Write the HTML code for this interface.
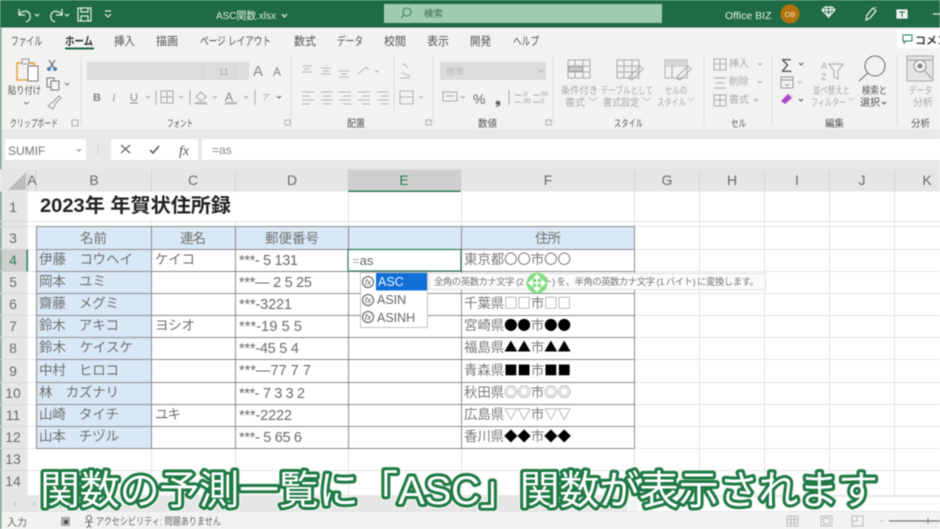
<!DOCTYPE html>
<html lang="ja"><head><meta charset="utf-8"><style>
html,body{margin:0;padding:0;background:#fff;width:940px;height:529px;overflow:hidden}
svg{display:block;filter:blur(.55px)}
text{font-family:"Liberation Sans","Noto Sans CJK JP",sans-serif}
.tab{font-size:11.5px;fill:#555}
.lb{font-size:10px;fill:#555}
.g{font-size:10px;fill:#aaa}
.rh{font-size:14px;fill:#6a6a6a;text-anchor:middle}
.ch{font-size:14px;fill:#6a6a6a;text-anchor:middle}
.c{font-size:13.5px;fill:#707070}
.d{font-size:14.5px;fill:#6a6a6a}
.f{font-size:13.5px;fill:#7a7a7a;font-family:"Noto Sans CJK JP",sans-serif}
.k{fill:#000}
.ic{fill:none;stroke:#aaa;stroke-width:1}
.ac{font-size:12.5px;fill:#666}
</style></head><body>
<svg width="940" height="529" viewBox="0 0 940 529" xmlns="http://www.w3.org/2000/svg">
<rect width="940" height="529" fill="#fff"/>
<!-- title bar -->
<rect width="940" height="27.5" fill="#1f6b45"/>
<g fill="none" stroke="#e4efe9" stroke-width="1.200">
<path d="M19 9v6h6M19 15c3-5 10-5 11 0c1 3-1 6-4 7"/>
<path d="M62 9v6h-6M62 15c-3-5-10-5-11 0c-1 3 1 6 4 7"/>
<rect x="78" y="8" width="13" height="13"/><path d="M81 8v4h7V8M81 21v-5h7v5"/>
<path d="M35 14l2 2 2-2M65 14l2 2 2-2"/>
<path d="M105 11h6M105 14l3 3 3-3"/>
</g>
<text x="216" y="19" font-size="10.500" fill="#dfece5" textLength="60" lengthAdjust="spacingAndGlyphs">ASC関数.xlsx</text>
<path d="M282 14l2.500 3 2.500-3" fill="none" stroke="#e8f0ec" stroke-width="1.300"/>
<rect x="384" y="4" width="278" height="19" fill="#9fcbb3"/>
<circle cx="407" cy="12" r="4" fill="none" stroke="#3d7a5a"/><path d="M404 15l-3 3" stroke="#3d7a5a"/>
<text x="424" y="17" font-size="9.500" fill="#3d6b54">検索</text>
<text x="725" y="19" font-size="10.500" fill="#e6f0ea">Office BIZ</text>
<circle cx="790" cy="14" r="9.500" fill="#b4730a"/>
<text x="790" y="17" font-size="7.500" fill="#f3e3c6" text-anchor="middle">OB</text>
<g fill="none" stroke="#f0f5f2" stroke-width="1.200">
<path d="M822 10l3-3h7l3 3-6.500 7zM822 10h13M827 7l-1 3 2.500 7 2.500-7-1-3"/>
<path d="M866 20l1-5 6-7 3 3-6 7zM875 8l1-1"/>
<rect x="897" y="10" width="10" height="8" fill="#f0f5f2"/>
<path d="M933 14h7"/>
</g>
<path d="M899 12h6M902 12v5" stroke="#1f6b45" fill="none"/>
<!-- ribbon -->
<rect y="27.500" width="940" height="102" fill="#f3f2f1"/>
<rect x="0" y="27" width="1.500" height="502" fill="#6f9c84"/>
<text class="tab" x="11" y="45" textLength="31" lengthAdjust="spacingAndGlyphs">ファイル</text>
<text class="tab" x="65" y="45" style="font-weight:700;fill:#333" textLength="28" lengthAdjust="spacingAndGlyphs">ホーム</text>
<text class="tab" x="114" y="45" textLength="21" lengthAdjust="spacingAndGlyphs">挿入</text>
<text class="tab" x="156" y="45" textLength="22" lengthAdjust="spacingAndGlyphs">描画</text>
<text class="tab" x="200" y="45" textLength="71" lengthAdjust="spacingAndGlyphs">ページ レイアウト</text>
<text class="tab" x="294" y="45" textLength="22" lengthAdjust="spacingAndGlyphs">数式</text>
<text class="tab" x="337" y="45" textLength="26" lengthAdjust="spacingAndGlyphs">データ</text>
<text class="tab" x="384" y="45" textLength="22" lengthAdjust="spacingAndGlyphs">校閲</text>
<text class="tab" x="427" y="45" textLength="22" lengthAdjust="spacingAndGlyphs">表示</text>
<text class="tab" x="470" y="45" textLength="21" lengthAdjust="spacingAndGlyphs">開発</text>
<text class="tab" x="513" y="45" textLength="26" lengthAdjust="spacingAndGlyphs">ヘルプ</text>
<rect x="65" y="47.500" width="29" height="2" fill="#1f6b45"/>
<rect x="897" y="30" width="43" height="18" fill="#fff"/>
<path d="M903 35h9v6h-6l-2 2v-2h-1z" fill="none" stroke="#2a7a55"/>
<text x="915" y="44" font-size="11" font-weight="700" fill="#444">コメント</text>
<!-- separators -->
<g stroke="#dcdcdc"><path d="M81 55v71M291 55v71M394 55v57M433 55v71M553 55v71M704 55v71M772 55v71M897 55v71"/></g>
<!-- group labels -->
<text class="lb" x="10" y="127" textLength="48" lengthAdjust="spacingAndGlyphs">クリップボード</text>
<text class="lb" x="167" y="127" textLength="26" lengthAdjust="spacingAndGlyphs">フォント</text>
<text class="lb" x="347" y="127" textLength="18" lengthAdjust="spacingAndGlyphs">配置</text>
<text class="lb" x="478" y="127" textLength="19" lengthAdjust="spacingAndGlyphs">数値</text>
<text class="lb" x="614" y="127" textLength="29" lengthAdjust="spacingAndGlyphs">スタイル</text>
<text class="lb" x="731" y="127" textLength="15" lengthAdjust="spacingAndGlyphs">セル</text>
<text class="lb" x="825" y="127" textLength="19" lengthAdjust="spacingAndGlyphs">編集</text>
<text class="lb" x="911" y="127" textLength="19" lengthAdjust="spacingAndGlyphs">分析</text>
<g fill="none" stroke="#999" stroke-width=".8"><path d="M72 120h6v6h-6zM285 120h5v5h-5zM426 120h5v5h-5zM546 120h5v5h-5z"/></g>
<!-- clipboard -->
<rect x="17" y="63" width="17" height="17" fill="none" stroke="#e3a23a" stroke-width="1.500"/>
<rect x="22" y="59" width="7" height="5" fill="#f3f2f1" stroke="#999"/>
<rect x="28" y="66" width="10" height="15" fill="#fff" stroke="#777"/>
<text x="8" y="94" font-size="10" fill="#555" textLength="33" lengthAdjust="spacingAndGlyphs">貼り付け</text>
<path d="M24 102l2.500 2 2.500-2" fill="none" stroke="#777"/>
<path d="M49 60l5 8M55 60l-5 8" stroke="#555" fill="none"/><circle cx="49" cy="69" r="2" fill="#4a82b8"/><circle cx="55" cy="69" r="2" fill="#4a82b8"/>
<rect x="47" y="78" width="7" height="9" fill="none" stroke="#777"/><rect x="51" y="81" width="8" height="9" fill="#f3f2f1" stroke="#777"/>
<path d="M65 83l2 2 2-2" fill="none" stroke="#777"/>
<path d="M48 106l6-5 5-5 2 2-5 5-3 6z" fill="none" stroke="#999"/>
<!-- font -->
<rect x="87" y="62" width="162" height="18" fill="#dcdcdc"/>
<rect x="207" y="62" width="1" height="18" fill="#e8e8e8"/><rect x="239" y="62" width="1" height="18" fill="#e8e8e8"/>
<text x="219" y="75" font-size="9" fill="#aaa">11</text>
<text x="253" y="76" font-size="15" fill="#888">A</text><text x="273" y="76" font-size="12" fill="#888">A</text>
<text x="93" y="101" font-size="11" font-weight="700" fill="#888">B</text>
<text x="112" y="101" font-size="11" font-style="italic" fill="#999" style="font-family:'Liberation Serif'">I</text>
<text x="130" y="101" font-size="11" fill="#888">U</text><path d="M130 103h8" stroke="#888"/>
<g class="ic">
<rect x="161" y="91" width="12" height="12"/><path d="M167 91v12M161 97h12"/>
<path d="M196 97l5-5 5 5-5 4z"/>
<path d="M146 96l2 2 2-2M179 96l2 2 2-2M213 96l2 2 2-2M244 96l2 2 2-2"/>
<path d="M156 90v15M190 90v15M255 90v15"/>
<path d="M277 96l2 2 2-2" stroke="#666"/>
</g>
<rect x="195" y="102" width="12" height="2.500" fill="#bbb"/><rect x="225" y="102" width="12" height="2.500" fill="#bbb"/>
<text x="225" y="101" font-size="12" fill="#888">A</text>
<text x="262" y="100" font-size="8" fill="#aaa">ア</text>
<!-- alignment -->
<g stroke="#b4b4b4" fill="none">
<path d="M302 66h10M304 69h6M302 72h10M321 68h10M323 71h6M321 74h10M339 71h10M341 74h6M339 77h10"/>
<path d="M302 92h12M302 96h8M302 100h12M302 104h8M321 92h12M323 96h8M321 100h12M323 104h8M339 92h12M343 96h8M339 100h12M343 104h8M358 92h12M362 96h8M358 100h12M362 104h8M377 92h12M381 96h8M377 100h12M381 104h8"/>
<path d="M358 74l8-7M366 67l3 3M375 70l2 2 2-2"/>
<path d="M402 64c3 0 5 2 5 4M402 72c3 2 6 4 8 4M400 78h10"/>
<rect x="400" y="91" width="13" height="13"/><path d="M400 97h13M404 97h5"/>
<path d="M419 96l2 2 2-2"/>
</g>
<!-- number -->
<rect x="440" y="62" width="106" height="18" fill="#dcdcdc"/>
<text x="446" y="75" font-size="9" fill="#bbb">標準</text>
<path d="M539 70l2 2 2-2" stroke="#aaa" fill="none"/>
<g stroke="#aaa" fill="none"><rect x="443" y="92" width="14" height="9"/><path d="M446 96h8M461 96l2 2 2-2M509 90v15M515 95h6M515 102h6M533 95h6M533 102h6"/></g>
<text x="473" y="104" font-size="14" fill="#666">%</text>
<text x="495" y="104" font-size="15" font-weight="700" fill="#666">❟</text>
<text x="522" y="96" font-size="6.500" fill="#999">.0</text><text x="522" y="103" font-size="6.500" fill="#999">.00</text>
<text x="539" y="96" font-size="6.500" fill="#999">.00</text><text x="539" y="103" font-size="6.500" fill="#999">.0</text>
<!-- styles -->
<g stroke="#aaa" fill="none">
<rect x="568" y="60" width="22" height="18"/><path d="M568 66h22M568 72h22M575 60v18M583 60v18"/><rect x="569" y="67" width="13" height="4" fill="#ccc"/>
<rect x="617" y="60" width="22" height="18"/><path d="M617 66h22M617 72h22M624 60v18M632 60v18M628 78l12-12 3 3-11 11z"/>
<rect x="665" y="60" width="22" height="18"/><path d="M665 66h22M672 66v12M676 78l12-12 3 3-11 11z"/>
</g>
<rect x="665" y="60" width="22" height="6" fill="#d6d6d6"/>
<text class="g" x="561" y="94" textLength="37" lengthAdjust="spacingAndGlyphs">条件付き</text><text class="g" x="565" y="106">書式 ﹀</text>
<text class="g" x="601" y="94" textLength="52" lengthAdjust="spacingAndGlyphs">テーブルとして</text><text class="g" x="603" y="106" textLength="48" lengthAdjust="spacingAndGlyphs">書式設定 ﹀</text>
<text class="g" x="665" y="94" textLength="22" lengthAdjust="spacingAndGlyphs">セルの</text><text class="g" x="657" y="106" textLength="38" lengthAdjust="spacingAndGlyphs">スタイル ﹀</text>
<text class="g" x="729" y="67">挿入</text><text class="g" x="729" y="85">削除</text><text class="g" x="729" y="103">書式</text>
<g stroke="#aaa" fill="none">
<rect x="714" y="59" width="12" height="11"/><path d="M720 59v11M714 64h12M714 78h12M714 88h12M716 83h8"/>
<rect x="714" y="95" width="12" height="11"/><path d="M720 95v11M714 100h12M758 63l2 2 2-2M758 81l2 2 2-2M754 99l2 2 2-2"/>
</g>
<!-- editing -->
<text x="781" y="72" font-size="18" fill="#555">Σ</text>
<path d="M799 63l2 2 2-2M799 99l2 2 2-2" stroke="#555" fill="none"/>
<rect x="781" y="77" width="12" height="11" fill="none" stroke="#999"/><path d="M781 80h12M785 84l2 2 2-2" stroke="#999" fill="none"/><path d="M798 81l2 2 2-2" stroke="#bbb" fill="none"/>
<path d="M781 101l7-7 4 4-7 6z" fill="#a64ac9"/><path d="M788 94l3-1 3 3-2 2z" fill="#e9d7f2"/>
<text x="821" y="69" font-size="9" fill="#aaa">A</text><text x="821" y="80" font-size="9" fill="#aaa">Z</text>
<path d="M829 64h14l-5 7v8l-4-2v-6z" fill="none" stroke="#aaa"/>
<text class="g" x="813" y="94" textLength="37" lengthAdjust="spacingAndGlyphs">並べ替えと</text><text class="g" x="811" y="106" textLength="44" lengthAdjust="spacingAndGlyphs">フィルター ﹀</text>
<circle cx="875" cy="66" r="10" fill="none" stroke="#666"/><path d="M868 73l-9 8" stroke="#666" fill="none"/>
<text x="862" y="94" font-size="10" fill="#555" textLength="25" lengthAdjust="spacingAndGlyphs">検索と</text><text x="860" y="106" font-size="10" fill="#555">選択</text><path d="M882 102l2 2 2-2" stroke="#555" fill="none"/>
<rect x="907" y="56" width="26" height="25" fill="#e5e5e5" stroke="#aaa"/><circle cx="920" cy="66" r="6" fill="#f3f3f3" stroke="#888"/><circle cx="920" cy="66" r="2.500" fill="#888"/><path d="M907 60h26M925 71l7 8" stroke="#999"/>
<text class="g" x="909" y="94" textLength="23" lengthAdjust="spacingAndGlyphs">データ</text><text class="g" x="913" y="106">分析</text>
<!-- formula bar -->
<rect x="1.500" y="129.500" width="938.500" height="40" fill="#e8e8e8"/>
<rect x="5" y="139" width="81" height="21" fill="#fff"/>
<text x="8" y="155" font-size="12" fill="#777">SUMIF</text>
<path d="M77 149l2 2 2-2" stroke="#888" fill="none"/>
<path d="M98 146v1M98 149v1M98 152v1" stroke="#aaa"/>
<rect x="111" y="139" width="87" height="21" fill="#fff"/>
<rect x="202" y="139" width="738" height="21" fill="#fff"/>
<path d="M121 145l9 8M130 145l-9 8" stroke="#666" stroke-width="1.300" fill="none"/>
<path d="M150 150l3 3 6-7" stroke="#555" stroke-width="1.500" fill="none"/>
<text x="179" y="155" font-size="14" font-style="italic" style="font-family:'Liberation Serif'" fill="#555">fx</text>
<text x="212" y="154" font-size="12" fill="#888">=as</text>
<!-- col headers -->
<rect x="0" y="169.500" width="940" height="22" fill="#e6e6e6"/>
<rect x="348" y="169.500" width="113" height="21" fill="#cfcfcf"/>
<rect x="348" y="190.500" width="113" height="1.500" fill="#2e7d55"/>
<rect x="1.500" y="192" width="26" height="303" fill="#e6e6e6"/>
<path d="M8 190L26 172V190z" fill="#bdbdbd"/>
<g stroke="#d2d2d2"><path d="M28 170v22M36 170v22M151.500 170v22M235.500 170v22M348 170v22M461 170v22M634.500 170v22M699.500 170v22M764.500 170v22M829.500 170v22M894.500 170v22"/></g>
<text class="ch" x="32" y="185">A</text><text class="ch" x="94" y="185">B</text><text class="ch" x="193" y="185">C</text>
<text class="ch" x="292" y="185">D</text><text class="ch" x="404" y="185" style="fill:#2e7d55">E</text><text class="ch" x="548" y="185">F</text>
<text class="ch" x="667" y="185">G</text><text class="ch" x="732" y="185">H</text><text class="ch" x="797" y="185">I</text><text class="ch" x="862" y="185">J</text><text class="ch" x="927" y="185">K</text>
<!-- gridlines -->
<g stroke="#e4e4e4">
<path d="M28 221.500H940M28 226.500H940M28 249.500H940M28 271.500H940M28 293.500H940M28 315.500H940M28 337.500H940M28 359.500H940M28 382.500H940M28 404.500H940M28 426.500H940M28 448.500H940M28 470.500H940"/>
<path d="M151.500 221v274M235.500 221v274M348.500 192v303M461.500 192v303M634.500 192v303M699.500 192v303M764.500 192v303M829.500 192v303M894.500 192v303"/>
<path d="M0 221.500H27M0 226.500H27M0 249.500H27M0 271.500H27M0 293.500H27M0 315.500H27M0 337.500H27M0 359.500H27M0 382.500H27M0 404.500H27M0 426.500H27M0 448.500H27M0 470.500H27" stroke="#d5d5d5"/>
</g>
<rect x="1.500" y="249.500" width="26" height="22" fill="#cfcfcf"/>
<rect x="26.500" y="249.500" width="1.500" height="22" fill="#2e7d55"/>
<text class="rh" x="13" y="212">1</text><text class="rh" x="13" y="243">3</text><text class="rh" x="13" y="265" style="fill:#2e7d55">4</text>
<text class="rh" x="13" y="287">5</text><text class="rh" x="13" y="309">6</text><text class="rh" x="13" y="331">7</text><text class="rh" x="13" y="353">8</text>
<text class="rh" x="13" y="376">9</text><text class="rh" x="13" y="398">10</text><text class="rh" x="13" y="420">11</text><text class="rh" x="13" y="442">12</text><text class="rh" x="13" y="464">13</text><text class="rh" x="13" y="486">14</text>
<!-- table fills -->
<rect x="36" y="226.500" width="598.500" height="23" fill="#d9e8f6"/>
<rect x="36" y="249.500" width="115.500" height="199" fill="#d9e8f6"/>
<g stroke="#8c8c8c" fill="none">
<path d="M36 271.500H634.500M36 293.500H634.500M36 315.500H634.500M36 337.500H634.500M36 359.500H634.500M36 382.500H634.500M36 404.500H634.500M36 426.500H634.500M36 448.500H634.500M36 249.500H634.500"/>
<path d="M36.500 226v223M151.500 226v223M235.500 226v223M348.500 226v223M461.500 226v223M634.500 226v223M36 226.500H634.500"/>
</g>
<text x="40" y="212" font-size="19.500" font-weight="700" fill="#222" textLength="191" lengthAdjust="spacingAndGlyphs">2023年 年賀状住所録</text>
<text class="c" x="80" y="243" textLength="27">名前</text><text class="c" x="180" y="243" textLength="26">連名</text>
<text class="c" x="265" y="243" textLength="54">郵便番号</text><text class="c" x="535" y="243" textLength="26">住所</text>
<text class="c" x="39" y="264" textLength="94">伊藤　コウヘイ</text>
<text class="c" x="39" y="286" textLength="67">岡本　ユミ</text>
<text class="c" x="39" y="308" textLength="80">齋藤　メグミ</text>
<text class="c" x="39" y="330" textLength="80">鈴木　アキコ</text>
<text class="c" x="39" y="352" textLength="94">鈴木　ケイスケ</text>
<text class="c" x="39" y="375" textLength="80">中村　ヒロコ</text>
<text class="c" x="39" y="397" textLength="80">林　カズナリ</text>
<text class="c" x="39" y="419" textLength="80">山崎　タイチ</text>
<text class="c" x="39" y="441" textLength="80">山本　チヅル</text>
<text class="c" x="155" y="264" textLength="40">ケイコ</text>
<text class="c" x="155" y="330" textLength="40">ヨシオ</text>
<text class="c" x="155" y="419" textLength="26">ユキ</text>
<text class="d" x="239" y="265" textLength="59">***- 5 131</text>
<text class="d" x="239" y="287" textLength="73">***— 2 5 25</text>
<text class="d" x="239" y="309" textLength="53">***-3221</text>
<text class="d" x="239" y="331" textLength="63">***-19 5 5</text>
<text class="d" x="239" y="353" textLength="60">***-45 5 4</text>
<text class="d" x="239" y="375" textLength="72">***—77 7 7</text>
<text class="d" x="239" y="398" textLength="66">***- 7 3 3 2</text>
<text class="d" x="239" y="420" textLength="53">***-2222</text>
<text class="d" x="239" y="442" textLength="63">***- 5 65 6</text>
<text class="f" x="464" y="264" textLength="107">東京都〇〇市〇〇</text>
<text class="f" x="464" y="308" textLength="107">千葉県□□市□□</text>
<text class="f" x="464" y="330" textLength="107">宮崎県<tspan class="k">●●</tspan>市<tspan class="k">●●</tspan></text>
<text class="f" x="464" y="352" textLength="107">福島県<tspan class="k">▲▲</tspan>市<tspan class="k">▲▲</tspan></text>
<text class="f" x="464" y="375" textLength="107">青森県<tspan class="k">■■</tspan>市<tspan class="k">■■</tspan></text>
<text class="f" x="464" y="397" textLength="107">秋田県◎◎市◎◎</text>
<text class="f" x="464" y="419" textLength="107">広島県▽▽市▽▽</text>
<text class="f" x="464" y="441" textLength="107">香川県<tspan class="k">◆◆</tspan>市<tspan class="k">◆◆</tspan></text>
<!-- active cell -->
<rect x="348" y="249.500" width="113" height="21.500" fill="#fff" stroke="#2e7d55" stroke-width="1.200"/>
<text x="352" y="265" font-size="13" fill="#666"><tspan fill="#aaa">=</tspan>as</text>
<!-- autocomplete -->
<rect x="360.500" y="272.500" width="67" height="55" fill="#fff" stroke="#c4c4c4"/>
<rect x="376" y="273" width="51" height="17.500" fill="#1070d8"/>
<g fill="none" stroke="#555"><circle cx="368" cy="282" r="5.500"/><circle cx="368" cy="300" r="5.500"/><circle cx="368" cy="317" r="5.500"/></g>
<g font-size="8" font-style="italic" fill="#555" text-anchor="middle"><text x="368" y="285">fx</text><text x="368" y="303">fx</text><text x="368" y="320">fx</text></g>
<text x="378" y="286" class="ac" style="fill:#eef5ff">ASC</text>
<text x="377" y="304" class="ac">ASIN</text>
<text x="377" y="322" class="ac">ASINH</text>
<!-- tooltip -->
<rect x="429.500" y="273.500" width="336" height="16" fill="#fbfbfb" stroke="#e0e0e0"/>
<text x="434" y="285" font-size="9.500" fill="#777" textLength="325">全角の英数カナ文字 (2 バイト) を、半角の英数カナ文字 (1 バイト) に変換します。</text>
<!-- cursor -->
<circle cx="537" cy="283" r="10.500" fill="#7ddc7d" opacity=".95"/>
<path d="M537 275v16M529 283h16M537 275l-2.500 3h5zM537 291l-2.500-3h5zM529 283l3-2.500v5zM545 283l-3-2.500v5z" stroke="#fff" stroke-width="1.500" fill="#fff"/>
<!-- tabs bar -->
<rect x="1.500" y="495" width="938.500" height="17" fill="#e6e6e6"/>
<rect x="60" y="495" width="57" height="15" fill="#eef5ea"/>
<rect x="60" y="506" width="57" height="2" fill="#9ecb9e"/>
<rect x="627" y="497" width="313" height="14" fill="#fff"/>
<rect x="627" y="497" width="11" height="14" fill="#f4f4f4"/>
<path d="M16 502l-2 2 2 2M33 502l2 2-2 2" stroke="#bbb" fill="none"/>
<!-- status bar -->
<rect x="1.500" y="512" width="938.500" height="17" fill="#f3f2f1"/>
<text x="7" y="526" font-size="10" fill="#666">入力</text>
<rect x="61" y="517" width="9" height="9" fill="#aaa"/><circle cx="66" cy="522" r="2" fill="#444"/>
<circle cx="89" cy="518" r="2.500" fill="none" stroke="#666"/><path d="M85 522h8M89 522v3l-2 3M89 525l2 3" stroke="#666" fill="none"/>
<text x="96" y="525" font-size="10" fill="#666" textLength="125" lengthAdjust="spacingAndGlyphs">アクセシビリティ: 問題ありません</text>
<g stroke="#bbb" fill="none">
<rect x="787" y="516" width="11" height="10"/><path d="M787 519.500h11M787 523h11M791 516v10M794.500 516v10"/>
<rect x="821" y="516" width="11" height="10"/><rect x="823.500" y="518" width="6" height="6"/>
<rect x="852" y="516" width="11" height="10"/><path d="M857 516v5h-5"/>
<path d="M880 521h4"/>
</g>
<path d="M889 521h51" stroke="#777" stroke-width="1.200"/><path d="M928 518v6" stroke="#777"/>
<!-- caption -->
<g font-size="40" stroke-linejoin="round">
<text x="40" y="504" textLength="838" fill="none" stroke="#f4f8f4" stroke-width="8.500">関数の予測一覧に「ASC」関数が表示されます</text>
<text x="40" y="504" textLength="838" fill="none" stroke="#1f7a45" stroke-width="6">関数の予測一覧に「ASC」関数が表示されます</text>
<text x="40" y="504" textLength="838" fill="#fff">関数の予測一覧に「ASC」関数が表示されます</text>
</g>
</svg>
</body></html>
